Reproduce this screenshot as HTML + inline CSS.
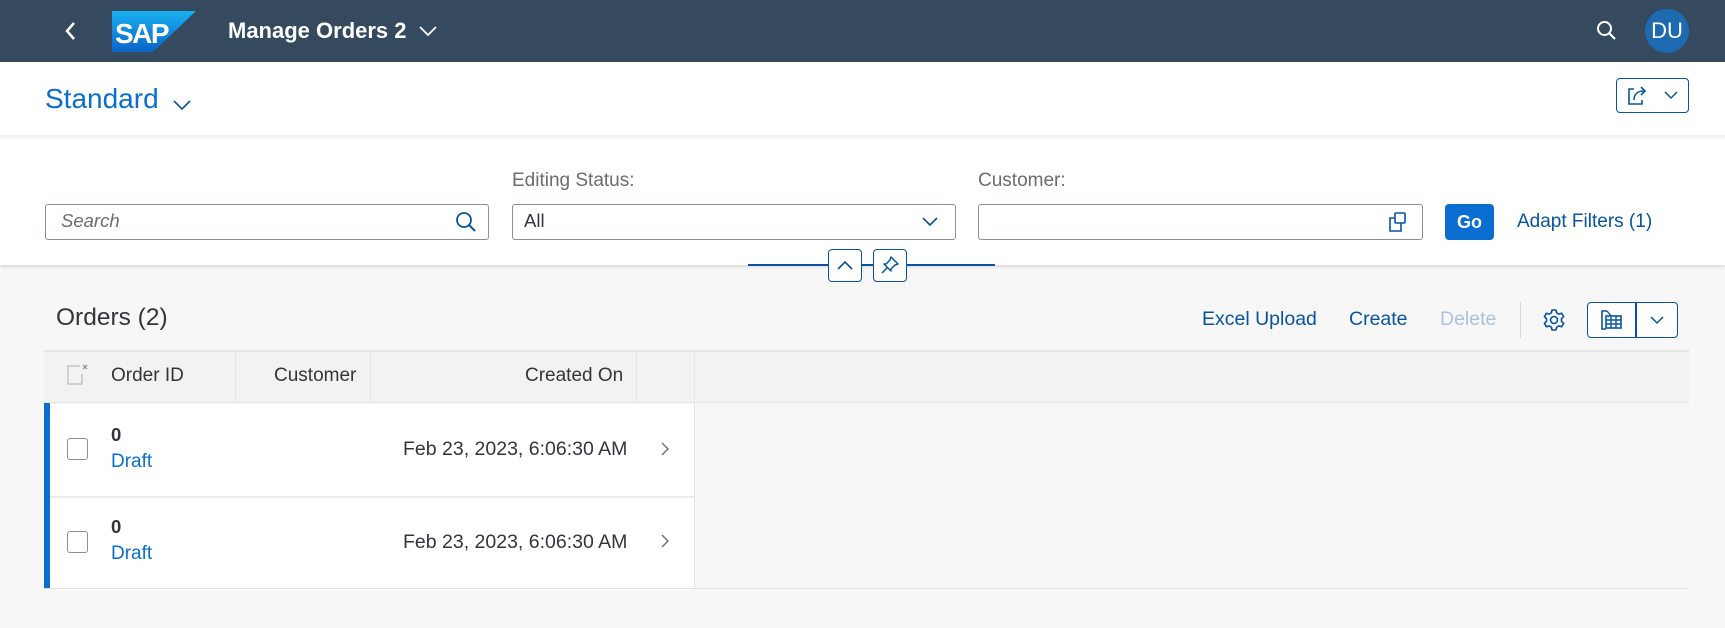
<!DOCTYPE html>
<html><head><meta charset="utf-8"><style>
*{box-sizing:border-box;margin:0;padding:0}
body{width:1725px;height:628px;overflow:hidden;background:#f7f7f7;font-family:"Liberation Sans",Arial,sans-serif;position:relative;color:#32363a}
.a{position:absolute}
.blue{color:#0a6ed1}
.lnk{color:#0854a0}
.inp{position:absolute;background:#fff;border:1px solid #89919a;border-radius:3px;height:36px}
.bbtn{position:absolute;border:1.5px solid #0854a0;border-radius:4px;background:#fff}
</style></head><body>
<div class="a" style="left:0;top:0;width:1725px;height:62px;background:#354a5f"></div>
<svg class="a" style="left:64px;top:21px" width="14" height="20"><path d="M10 2 L3 10 L10 18" stroke="#fff" stroke-width="2.5" fill="none"/></svg>
<svg class="a" style="left:112px;top:11px" width="84" height="41"><defs><linearGradient id="g" x1="0" y1="0" x2="0" y2="1"><stop offset="0" stop-color="#1ab1f0"/><stop offset="1" stop-color="#0a64c8"/></linearGradient></defs><path d="M0 0 H84 L41 41 H0 Z" fill="url(#g)"/><text x="3" y="32" font-family="Liberation Sans" font-weight="bold" font-size="28" fill="#fff" letter-spacing="-1.5">SAP</text></svg>
<div class="a" style="left:228px;top:18px;font-size:22px;font-weight:bold;color:#fff">Manage Orders 2</div>
<svg class="a" style="left:418px;top:25px" width="20" height="12"><path d="M2 2 L10 10 L18 2" stroke="#fff" stroke-width="1.8" fill="none"/></svg>
<svg class="a" style="left:1596px;top:20px" width="22" height="22"><circle cx="8.5" cy="8.5" r="6.5" stroke="#fff" stroke-width="2" fill="none"/><path d="M13 13 L19 19" stroke="#fff" stroke-width="2.2"/></svg>
<div class="a" style="left:1645px;top:9px;width:44px;height:44px;border-radius:50%;background:#1e6ab0;color:#fff;font-size:22px;text-align:center;line-height:44px">DU</div>

<div class="a" style="left:0;top:62px;width:1725px;height:75px;background:#fff;border-bottom:2px solid #f2f2f2"></div>
<div class="a blue" style="left:45px;top:83px;font-size:28px">Standard</div>
<svg class="a" style="left:172px;top:99px" width="20" height="12"><path d="M2 2 L10 10 L18 2" stroke="#0854a0" stroke-width="1.6" fill="none"/></svg>
<div class="bbtn" style="left:1616px;top:78px;width:73px;height:35px"></div>
<svg class="a" style="left:1625px;top:84px" width="28" height="24"><path d="M9 5 H4 V20 H17 V16" stroke="#0854a0" stroke-width="1.6" fill="none"/><path d="M9 16 C9 10 13 7 19 7 M16 3 L20 7 L16 11" stroke="#0854a0" stroke-width="1.6" fill="none"/></svg>
<svg class="a" style="left:1664px;top:90px" width="14" height="10"><path d="M1 2 L7 8 L13 2" stroke="#0854a0" stroke-width="1.5" fill="none"/></svg>

<div class="a" style="left:0;top:139px;width:1725px;height:126px;background:#fff;box-shadow:0 2px 3px rgba(0,0,0,.12)"></div>
<div class="a" style="left:512px;top:170px;font-size:19px;color:#6a6d70">Editing Status:</div>
<div class="a" style="left:978px;top:170px;font-size:19px;color:#6a6d70">Customer:</div>
<div class="inp" style="left:45px;top:204px;width:444px"></div>
<div class="a" style="left:61px;top:210px;font-size:18.5px;font-style:italic;color:#6a6d70">Search</div>
<svg class="a" style="left:454px;top:210px" width="24" height="24"><circle cx="10" cy="10" r="7" stroke="#0854a0" stroke-width="1.8" fill="none"/><path d="M15 15 L21 21" stroke="#0854a0" stroke-width="2"/></svg>
<div class="inp" style="left:512px;top:204px;width:444px"></div>
<div class="a" style="left:524px;top:210px;font-size:18.5px">All</div>
<svg class="a" style="left:921px;top:216px" width="18" height="12"><path d="M2 2 L9 9 L16 2" stroke="#0854a0" stroke-width="1.6" fill="none"/></svg>
<div class="inp" style="left:978px;top:204px;width:445px"></div>
<svg class="a" style="left:1386px;top:210px" width="24" height="24"><rect x="9" y="3" width="10" height="10" rx="1" stroke="#0854a0" stroke-width="1.6" fill="none"/><path d="M9 8 H4 V21 H15 V13" stroke="#0854a0" stroke-width="1.6" fill="none"/></svg>
<div class="a" style="left:1445px;top:204px;width:49px;height:36px;background:#0a6ed1;border-radius:4px;color:#fff;font-weight:bold;font-size:18px;text-align:center;line-height:36px">Go</div>
<div class="a lnk" style="left:1517px;top:211px;font-size:19px">Adapt Filters (1)</div>
<div class="a" style="left:748px;top:264px;width:247px;height:1.5px;background:#0854a0"></div>
<div class="bbtn" style="left:828px;top:249px;width:34px;height:33px"></div>
<svg class="a" style="left:835px;top:258px" width="20" height="14"><path d="M3 11 L10 4 L17 11" stroke="#0854a0" stroke-width="1.6" fill="none"/></svg>
<div class="bbtn" style="left:873px;top:249px;width:34px;height:33px"></div>
<svg class="a" style="left:879px;top:254px" width="22" height="22"><path d="M12 3 L19 10 L16 11 L12 15 L12 17 L5 10 L7 10 L11 6 Z M8 14 L3 19" stroke="#0854a0" stroke-width="1.5" fill="none" stroke-linejoin="round"/></svg>

<div class="a" style="left:56px;top:304px;font-size:24.5px">Orders (2)</div>
<div class="a lnk" style="left:1202px;top:308px;font-size:19.5px">Excel Upload</div>
<div class="a lnk" style="left:1349px;top:308px;font-size:19.5px">Create</div>
<div class="a" style="left:1440px;top:308px;font-size:19.5px;color:#a9c3dd">Delete</div>
<div class="a" style="left:1520px;top:302px;width:1px;height:36px;background:#d9d9d9"></div>
<svg class="a" style="left:1542px;top:308px" width="24" height="24" viewBox="0 0 24 24"><path d="M10 2h4l.6 2.8 2.3 1.3 2.7-.9 2 3.5-2.1 1.9v2.8l2.1 1.9-2 3.5-2.7-.9-2.3 1.3L14 22h-4l-.6-2.8-2.3-1.3-2.7.9-2-3.5 2.1-1.9v-2.8L2.4 8.7l2-3.5 2.7.9 2.3-1.3z" stroke="#0854a0" stroke-width="1.6" fill="none" stroke-linejoin="round"/><circle cx="12" cy="12" r="3.5" stroke="#0854a0" stroke-width="1.6" fill="none"/></svg>
<div class="bbtn" style="left:1587px;top:302px;width:91px;height:36px"></div>
<div class="a" style="left:1635px;top:303px;width:1.5px;height:34px;background:#0854a0"></div>
<svg class="a" style="left:1598px;top:308px" width="30" height="24"><path d="M9 3 H4 V21 H8" stroke="#0854a0" stroke-width="1.6" fill="none"/><rect x="8" y="8" width="15" height="12" stroke="#0854a0" stroke-width="1.6" fill="none"/><path d="M8 12 H23 M8 16 H23 M13 8 V20 M18 8 V20 M9 3 L13 8" stroke="#0854a0" stroke-width="1.4"/></svg>
<svg class="a" style="left:1650px;top:315px" width="14" height="10"><path d="M1 2 L7 8 L13 2" stroke="#0854a0" stroke-width="1.5" fill="none"/></svg>

<div class="a" style="left:44px;top:350px;width:1645px;height:53px;background:#f2f2f2;border-top:2px solid #e5e5e5;border-bottom:1px solid #e5e5e5"></div>
<div class="a" style="left:235px;top:352px;width:1px;height:50px;background:#e5e5e5"></div>
<div class="a" style="left:370px;top:352px;width:1px;height:50px;background:#e5e5e5"></div>
<div class="a" style="left:636px;top:352px;width:1px;height:50px;background:#e5e5e5"></div>
<div class="a" style="left:694px;top:352px;width:1px;height:238px;background:#e5e5e5"></div>
<svg class="a" style="left:66px;top:362px" width="24" height="24"><path d="M14 4 H2 V22 H16 V12" stroke="#c4c4c4" stroke-width="1.5" fill="none"/><path d="M17 3 L21 7 M21 3 L17 7" stroke="#8a8a8a" stroke-width="1.2"/></svg>
<div class="a" style="left:111px;top:365px;font-size:19px">Order ID</div>
<div class="a" style="left:274px;top:365px;font-size:19px">Customer</div>
<div class="a" style="left:525px;top:365px;font-size:19px">Created On</div>

<div class="a" style="left:44px;top:404px;width:650px;height:186px;background:#fff"></div>
<div class="a" style="left:44px;top:403px;width:6px;height:186px;background:#0a6ed1"></div>
<div class="a" style="left:50px;top:496px;width:644px;height:2px;background:#ececec"></div>
<div class="a" style="left:44px;top:588px;width:650px;height:1px;background:#e0e0e0"></div>

<div class="a" style="left:67px;top:438px;width:21px;height:22px;border:1px solid #89919a;border-radius:3px;background:#fff"></div>
<div class="a" style="left:111px;top:424px;font-size:18.5px;font-weight:bold">0</div>
<div class="a blue" style="left:111px;top:451px;font-size:19px">Draft</div>
<div class="a" style="left:403px;top:438px;font-size:19.5px">Feb 23, 2023, 6:06:30 AM</div>
<svg class="a" style="left:659px;top:441px" width="12" height="16"><path d="M3 2 L9 8 L3 14" stroke="#6a6d70" stroke-width="1.4" fill="none"/></svg>

<div class="a" style="left:67px;top:531px;width:21px;height:22px;border:1px solid #89919a;border-radius:3px;background:#fff"></div>
<div class="a" style="left:111px;top:516px;font-size:18.5px;font-weight:bold">0</div>
<div class="a blue" style="left:111px;top:543px;font-size:19px">Draft</div>
<div class="a" style="left:403px;top:531px;font-size:19.5px">Feb 23, 2023, 6:06:30 AM</div>
<svg class="a" style="left:659px;top:533px" width="12" height="16"><path d="M3 2 L9 8 L3 14" stroke="#6a6d70" stroke-width="1.4" fill="none"/></svg>
<div class="a" style="left:694px;top:588px;width:995px;height:1px;background:#e5e5e5"></div>
</body></html>
